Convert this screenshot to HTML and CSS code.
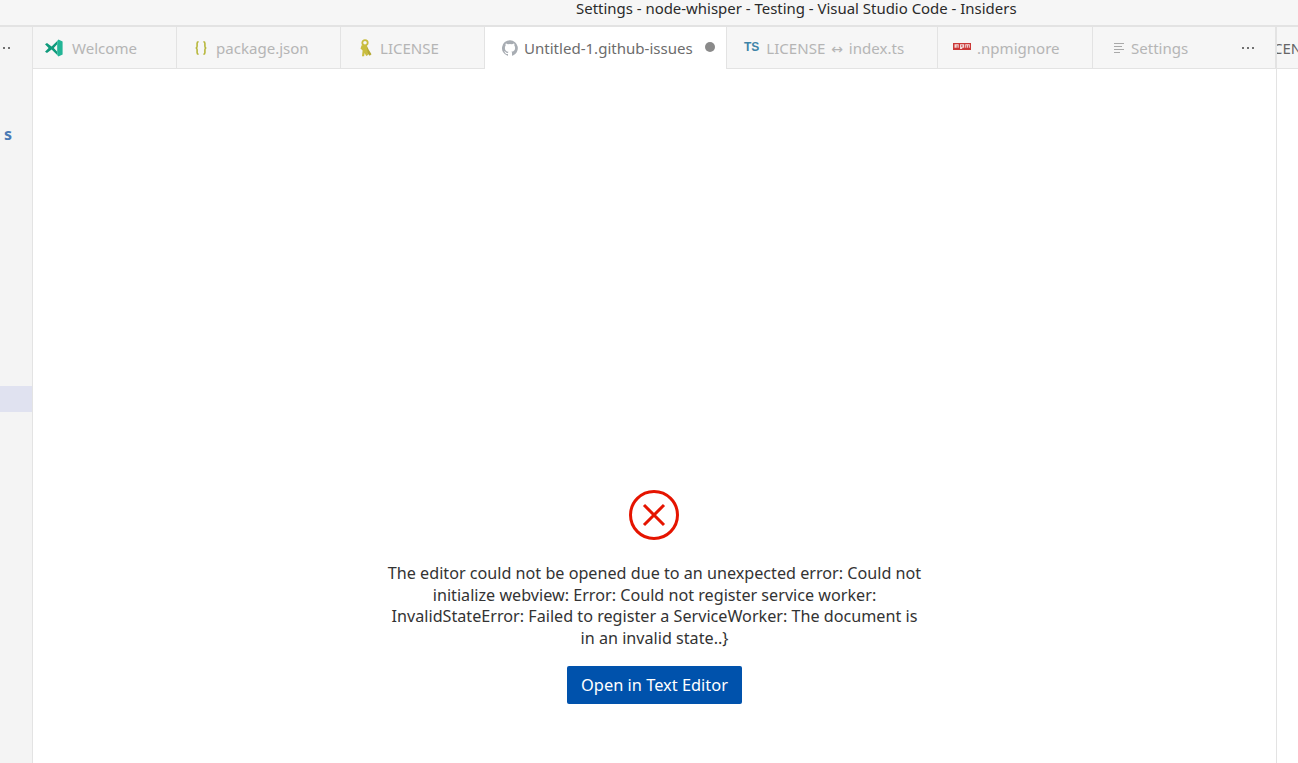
FILE: index.html
```html
<!DOCTYPE html>
<html lang="en">
<head>
<meta charset="utf-8">
<title>Settings - node-whisper - Testing - Visual Studio Code - Insiders</title>
<link rel="stylesheet" href="styles.css">
</head>
<body>
<header class="titlebar">Settings - node-whisper - Testing - Visual Studio Code - Insiders</header>
<div class="workspace">
  <aside class="sidebar">
    <div class="side-more"><i></i><i></i></div>
    <div class="side-letter">s</div>
    <div class="side-selected"></div>
  </aside>
  <main class="editor-group">
    <nav class="tabs">
      <div class="tab tab-welcome">
        <svg class="icon" width="20" height="20" viewBox="0 0 20 20"><path fill="#0f9a7c" d="M1 6.200 3 5l4.600 3.600L13.200 3v3.200L9.800 10l3.400 3.800V17l-5.600-5.600L3 15l-2-1.200L4.600 10z"/><path fill="#22b596" d="M13.200 3 14.400 1.600 18.600 3.400V16.600L14.400 18.400 13.200 17z"/></svg>
        <span class="label">Welcome</span>
      </div>
      <div class="tab tab-package">
        <svg class="icon" width="14" height="16" viewBox="0 0 14 16"><path fill="none" stroke="#b7b73b" stroke-width="1.600" d="M4.600 1.800c-1.200 0-1.500.5-1.500 1.500v2.900c0 1-.4 1.600-1.300 1.800.9.200 1.300.8 1.300 1.800v2.900c0 1 .3 1.500 1.500 1.500M9.400 1.800c1.200 0 1.500.5 1.500 1.500v2.900c0 1 .4 1.600 1.300 1.800-.9.200-1.300.8-1.300 1.800v2.900c0 1-.3 1.500-1.500 1.500"/></svg>
        <span class="label">package.json</span>
      </div>
      <div class="tab tab-license">
        <svg class="icon" width="14" height="18" viewBox="0 0 14 18"><path fill="#b5a934" d="M7 5l2.600 5.500 2.900 4.700-1.800 1.500-2.700-2.700z"/><circle cx="6" cy="3.800" r="2.700" fill="none" stroke="#c9bd3f" stroke-width="1.800"/><path fill="#c9bd3f" d="M2.600 6.300h5.200l.5 4.200.8 5.500-2 1-1.400-3-.6 3.300H3l.6-5.800L1.500 9.500z"/></svg>
        <span class="label">LICENSE</span>
      </div>
      <div class="tab tab-active">
        <svg class="icon" width="16" height="16" viewBox="0 0 16 16"><path fill="#a8adb3" d="M8 .2a8 8 0 0 0-2.500 15.600c.4.100.5-.2.500-.4v-1.400c-2.200.5-2.700-1-2.700-1-.4-.9-.9-1.200-.9-1.200-.7-.5.100-.5.100-.5.800.1 1.200.8 1.200.8.700 1.200 1.900.9 2.300.7.100-.5.300-.9.500-1.100-1.800-.2-3.600-.9-3.600-4 0-.9.300-1.600.8-2.100-.1-.2-.4-1 .1-2.100 0 0 .7-.2 2.200.8a7.500 7.500 0 0 1 4 0c1.500-1 2.200-.8 2.200-.8.400 1.100.2 1.900.1 2.100.5.600.8 1.300.8 2.100 0 3.100-1.900 3.700-3.700 3.900.3.300.6.800.6 1.500v2.200c0 .2.100.5.600.4A8 8 0 0 0 8 .2z"/></svg>
        <span class="label">Untitled-1.github-issues</span>
        <span class="dirty"></span>
      </div>
      <div class="tab tab-ts">
        <span class="ts-icon">TS</span>
        <span class="label">LICENSE <small class="arrow">↔</small> index.ts</span>
      </div>
      <div class="tab tab-npm">
        <svg class="icon" width="18" height="7" viewBox="0 0 18 7"><rect width="18" height="7" fill="#cb3837"/><path fill="#f3d9d9" d="M1.500 1.200h4.200v3.600H4.500V2.300h-.8v2.500H1.500zM7 1.200h4.200v3.600H9.200V6H7zm1.200 1.100v1.500H9.500V2.300zM12.200 1.200h4.600v3.600h-1V2.300H15v2.500h-.9V2.300h-.8v2.500h-1.100z"/></svg>
        <span class="label">.npmignore</span>
      </div>
      <div class="tab tab-settings">
        <svg class="icon" width="12" height="12" viewBox="0 0 12 12"><path fill="none" stroke="#a9a9a9" d="M1 1.500h10M1 4.500h8M1 7.500h10M1 10.500h6"/></svg>
        <span class="label">Settings</span>
        <span class="more"><i></i><i></i><i></i></span>
      </div>
    </nav>
    <section class="editor">
      <svg class="error-icon" width="50" height="50" viewBox="0 0 50 50"><circle cx="25" cy="25" r="23.500" fill="none" stroke="#e51400" stroke-width="3"/><path fill="none" stroke="#e51400" stroke-width="3" d="M15 15l20 20M35 15L15 35"/></svg>
      <p class="message">The editor could not be opened due to an unexpected error: Could not initialize webview: Error: Could not register service worker: InvalidStateError: Failed to register a ServiceWorker: The document is in an invalid state..}</p>
      <button class="open-btn" type="button">Open in Text Editor</button>
    </section>
  </main>
  <aside class="right-panel">
    <div class="right-tab"><span class="clipped">LICENSE</span></div>
    <div class="right-body"></div>
  </aside>
</div>
</body>
</html>
```
FILE: styles.css
```css
* { box-sizing: border-box; }
html, body { height: 100%; }
body {
  margin: 0;
  height: 763px;
  overflow: hidden;
  display: flex;
  flex-direction: column;
  background: #fff;
  font-family: "Noto Sans", "Open Sans", sans-serif;
  color: #333;
}
.titlebar {
  height: 27px;
  flex: none;
  background: #f6f6f6;
  border-bottom: 2px solid #e3e3e3;
  padding-left: 576px;
  font-size: 14.950px;
  line-height: 17px;
  color: #2a2a2a;
  white-space: nowrap;
}
.workspace { flex: 1; display: flex; min-height: 0; }
.sidebar {
  width: 33px;
  flex: none;
  background: #f4f4f4;
  border-right: 1px solid #e3e3e3;
  display: flex;
  flex-direction: column;
}
.side-more {
  display: flex;
  gap: 3px;
  padding: 20px 0 0 3px;
  height: 96px;
}
.side-more i, .more i {
  width: 2px;
  height: 2px;
  border-radius: 50%;
  background: #444;
  display: block;
}
.side-letter {
  height: 22px;
  padding-left: 4px;
  font-weight: 700;
  font-size: 16px;
  line-height: 22px;
  color: #4a7ab5;
}
.side-selected {
  margin-top: 241px;
  height: 26px;
  background: #e0e2f0;
}
.editor-group { flex: 1; min-width: 0; display: flex; flex-direction: column; }
.tabs {
  height: 42px;
  flex: none;
  display: flex;
  background: #f6f6f6;
  border-bottom: 1px solid #e3e3e3;
}
.tab {
  flex: none;
  display: flex;
  align-items: center;
  border-right: 1px solid #e3e3e3;
  font-size: 15.050px;
  color: #b5b5b5;
  white-space: nowrap;
}
.tab-welcome { width: 144px; padding-left: 11px; gap: 8px; }
.tab-package { width: 164px; padding-left: 17px; gap: 8px; }
.tab-license { width: 144px; padding-left: 18px; gap: 7px; }
.tab-active {
  width: 242px;
  padding-left: 17px;
  gap: 6px;
  background: #fff;
  color: #6c6c6c;
  margin-bottom: -1px;
}
.dirty {
  width: 10px;
  height: 10px;
  border-radius: 50%;
  background: #8a8a8a;
  margin: 0 0 2px 6px;
}
.tab-ts { width: 211px; padding-left: 17px; gap: 7px; }
.ts-icon {
  font-family: "Liberation Sans", sans-serif;
  font-weight: 700;
  font-size: 12px;
  color: #3f84a8;
  margin-bottom: 2px;
}
.arrow { font-family: "DejaVu Sans", sans-serif; font-size: 14px; margin: 0 2px; }
.tab-npm { width: 155px; padding-left: 15px; gap: 6px; }
.tab-npm .icon { margin-bottom: 3px; }
.tab-settings { width: 183px; padding-left: 20px; gap: 6px; }
.more { display: flex; gap: 3px; margin-left: 48px; }
.icon { flex: none; }
.editor {
  flex: 1;
  display: flex;
  flex-direction: column;
  align-items: center;
  padding-top: 421px;
}
.error-icon { display: block; margin-left: -1px; }
.message {
  width: 540px;
  margin: 23px 0 0;
  font-size: 16.170px;
  line-height: 21.700px;
  text-align: center;
  color: #333;
}
.open-btn {
  margin-top: 16px;
  width: 175px;
  height: 38px;
  border: 0;
  border-radius: 2px;
  background: #0052ac;
  color: #fff;
  font: inherit;
  font-size: 16.400px;
}
.right-panel {
  width: 22px;
  flex: none;
  display: flex;
  flex-direction: column;
  border-left: 1px solid #e3e3e3;
}
.right-tab {
  height: 42px;
  background: #f6f6f6;
  border-bottom: 1px solid #e3e3e3;
  overflow: hidden;
  display: flex;
  align-items: center;
  font-size: 15.050px;
  color: #666;
}
.clipped { margin-left: -17px; white-space: nowrap; }
.right-body { flex: 1; background: #fff; }
```
